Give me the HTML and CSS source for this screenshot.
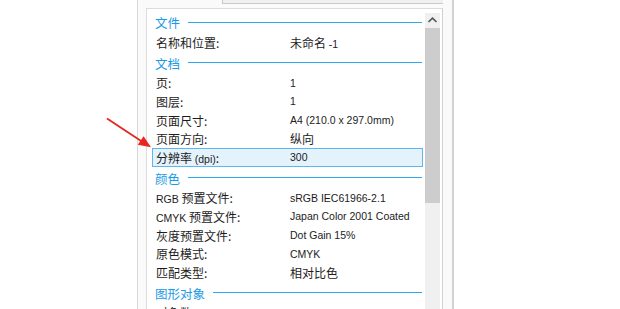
FILE: index.html
```html
<!DOCTYPE html>
<html>
<head>
<meta charset="utf-8">
<link rel="stylesheet" href="styles.css">
</head>
<body>
<div class="stage">
  <div class="dialog">
    <div class="topbar"><div class="topbox"></div></div>
    <div class="panel">
      <div class="list">
        <div class="heading"><span class="htext">文件</span><span class="hline"></span></div>
        <div class="row"><span class="label">名称和位置:</span><span class="value">未命名 <span class="lt">-1</span></span></div>
        <div class="heading"><span class="htext">文档</span><span class="hline"></span></div>
        <div class="row"><span class="label">页:</span><span class="value lt">1</span></div>
        <div class="row"><span class="label">图层:</span><span class="value lt">1</span></div>
        <div class="row"><span class="label">页面尺寸:</span><span class="value lt">A4 (210.0 x 297.0mm)</span></div>
        <div class="row"><span class="label">页面方向:</span><span class="value">纵向</span></div>
        <div class="row selected"><span class="label">分辨率 <span class="lt">(dpi)</span>:</span><span class="value lt">300</span></div>
        <div class="heading"><span class="htext">颜色</span><span class="hline"></span></div>
        <div class="row"><span class="label"><span class="lt">RGB</span> 预置文件:</span><span class="value lt">sRGB IEC61966-2.1</span></div>
        <div class="row"><span class="label"><span class="lt">CMYK</span> 预置文件:</span><span class="value lt">Japan Color 2001 Coated</span></div>
        <div class="row"><span class="label">灰度预置文件:</span><span class="value lt">Dot Gain 15%</span></div>
        <div class="row"><span class="label">原色模式:</span><span class="value lt">CMYK</span></div>
        <div class="row"><span class="label">匹配类型:</span><span class="value">相对比色</span></div>
        <div class="heading"><span class="htext">图形对象</span><span class="hline"></span></div>
        <div class="row"><span class="label">对象数:</span><span class="value lt">0</span></div>
      </div>
      <div class="scrollbar">
        <div class="sb-up">
          <svg width="15" height="15" viewBox="0 0 15 15"><polyline points="3.5,9 7.5,5.2 11.5,9" fill="none" stroke="#555" stroke-width="1.6"/></svg>
        </div>
        <div class="sb-thumb"></div>
        <div class="sb-track"></div>
      </div>
    </div>
  </div>
</div>
<svg class="arrow" width="620" height="309" viewBox="0 0 620 309">
  <line x1="107" y1="118.5" x2="143" y2="142.3" stroke="#e8261f" stroke-width="1.8"/>
  <polygon points="151,147.2 137.8,144.8 143.6,136.2" fill="#e8261f"/>
</svg>
</body>
</html>
```

FILE: styles.css
```css
html, body {
  margin: 0;
  padding: 0;
  background: #ffffff;
}
body {
  width: 620px;
  height: 309px;
  overflow: hidden;
  position: relative;
  font-family: "Noto Sans CJK SC", "Microsoft YaHei", sans-serif;
  font-size: 12px;
  color: #1c1c1c;
}
.stage {
  display: flex;
  padding-left: 137px;
  height: 309px;
}
.dialog {
  width: 314px;
  height: 309px;
  border-left: 1px solid #d8d8d8;
  border-right: 2px solid #d2d2d2;
  background: #fafafa;
  display: flex;
  flex-direction: column;
}
.topbar {
  height: 8px;
  display: flex;
}
.topbox {
  margin-left: 84px;
  width: 220px;
  height: 3px;
  border-left: 1px solid #c9c9c9;
  border-bottom: 1px solid #c9c9c9;
  background: #f0f0f0;
}
.panel {
  margin-left: 8px;
  width: 295px;
  flex: 1;
  border-top: 1px solid #dcdcdc;
  border-left: 1px solid #dcdcdc;
  border-right: 1px solid #d0d0d0;
  background: #ffffff;
  display: flex;
  overflow: hidden;
}
.list {
  width: 278px;
  padding-top: 2px;
  display: flex;
  flex-direction: column;
}
.heading {
  height: 22px;
  flex-shrink: 0;
  display: flex;
  align-items: center;
  padding-left: 8px;
  padding-right: 3px;
  color: #1a9be6;
  font-size: 12.5px;
}
.htext {
  padding-top: 1px;
}
.hline {
  flex: 1;
  height: 1px;
  margin-left: 8px;
  background: #2ca8ee;
}
.row {
  height: 18.6px;
  flex-shrink: 0;
  display: flex;
  align-items: center;
  margin-left: 5px;
  margin-right: 2px;
  padding-left: 4px;
  box-sizing: border-box;
}
.row.selected {
  border: 1px solid #5ab8ee;
  background: #e4f2fc;
  padding-left: 3px;
}
.label {
  width: 134px;
  flex-shrink: 0;
  white-space: nowrap;
}
.value {
  white-space: nowrap;
}
.lt {
  font-family: "Liberation Sans", Arial, sans-serif;
  font-size: 10.5px;
}
.scrollbar {
  width: 15px;
  margin-top: 4px;
  display: flex;
  flex-direction: column;
  background: #f0f0f0;
}
.sb-up {
  height: 15px;
  display: flex;
}
.sb-thumb {
  height: 175px;
  background: #cdcdcd;
}
.sb-track {
  flex: 1;
}
.arrow {
  position: absolute;
  left: 0;
  top: 0;
  pointer-events: none;
}
```
